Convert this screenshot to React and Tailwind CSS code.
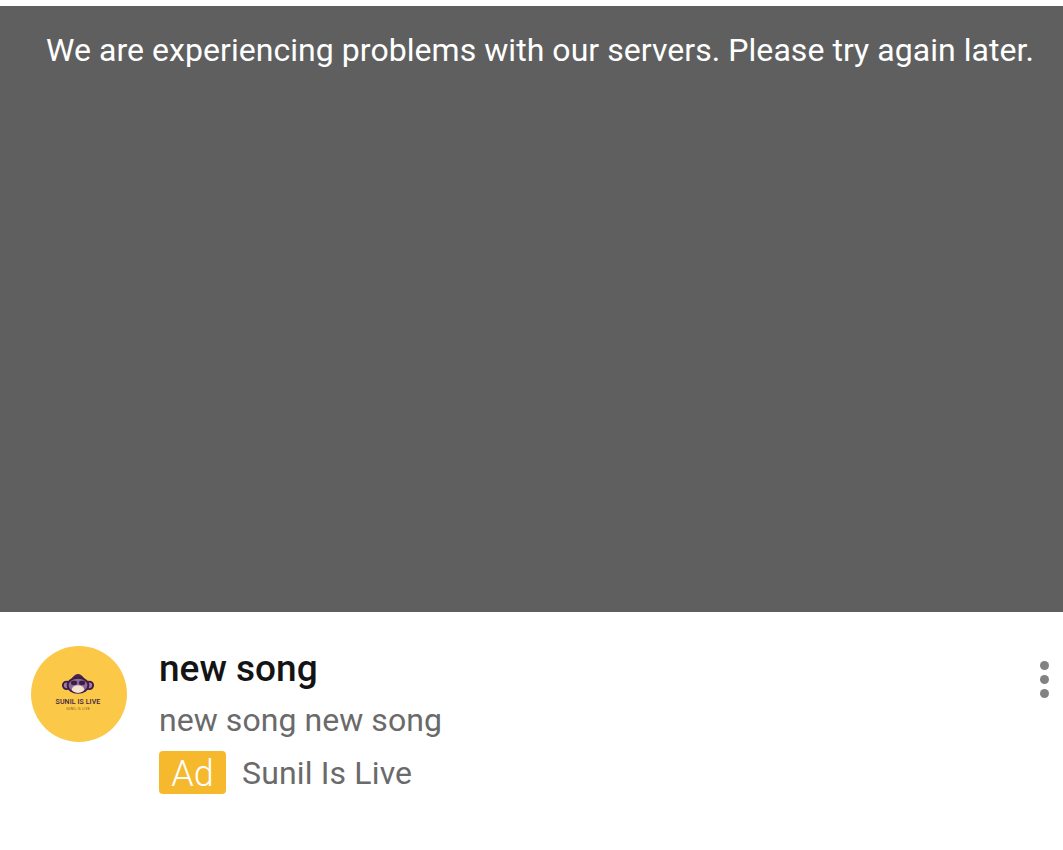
export default function App() {
  return (
    <div className="w-[1063px] h-[850px] bg-white overflow-hidden font-['Roboto',sans-serif]">
      <div className="h-[6px]" />
      <div className="h-[606px] bg-[#5f5f5f] text-white text-[32px] leading-[44px] tracking-[0.05px] pt-[22px] pl-[46px] whitespace-nowrap">
        We are experiencing problems with our servers. Please try again later.
      </div>
      <div className="flex pt-[34px] pl-[31px] pr-[14px]">
        <div className="w-[96px] h-[96px] rounded-full bg-[#fbc847] shrink-0 flex flex-col items-center pt-[26px]">
          <svg width="34" height="22" viewBox="0 0 36 23" className="-ml-[2px]">
            <path d="M11 7 Q18 -3 25 7 Z" fill="#4a2350" />
            <circle cx="6" cy="14" r="4" fill="#a07ca8" stroke="#3d1d44" strokeWidth="2" />
            <circle cx="30" cy="14" r="4" fill="#a07ca8" stroke="#3d1d44" strokeWidth="2" />
            <ellipse cx="18" cy="14" rx="11" ry="8" fill="#8d6a98" stroke="#3d1d44" strokeWidth="2" />
            <ellipse cx="18" cy="18" rx="6.5" ry="4" fill="#f3e3d0" />
            <rect x="10.5" y="9" width="6.5" height="4.5" rx="2" fill="#3d1d44" />
            <rect x="19" y="9" width="6.5" height="4.5" rx="2" fill="#3d1d44" />
          </svg>
          <div className="mt-[4px] -ml-[2px] text-[7px] leading-[9px] font-medium text-[#3d1d44] whitespace-nowrap tracking-[0.1px]">SUNIL IS LIVE</div>
          <div className="-ml-[2px] text-[3px] leading-[4px] tracking-[0.4px] text-[#6b4a2a] whitespace-nowrap">SUNIL IS LIVE</div>
        </div>
        <div className="ml-[32px] flex-1">
          <div className="text-[37px] leading-[46px] font-medium text-[#141414]">new song</div>
          <div className="text-[32px] leading-[40px] mt-[8px] tracking-[0.06px] text-[#6a6a6a]">new song new song</div>
          <div className="flex items-center mt-[11px]">
            <div className="w-[67px] h-[43px] rounded-[4px] bg-[#f6b92e] text-white text-[36px] font-light leading-[47px] text-center">Ad</div>
            <div className="ml-[16px] text-[32px] leading-[40px] tracking-[0.15px] text-[#6a6a6a]">Sunil Is Live</div>
          </div>
        </div>
        <div className="flex flex-col gap-[5px] pt-[15px]">
          <div className="w-[9px] h-[9px] rounded-full bg-[#828282]" />
          <div className="w-[9px] h-[9px] rounded-full bg-[#828282]" />
          <div className="w-[9px] h-[9px] rounded-full bg-[#828282]" />
        </div>
      </div>
    </div>
  );
}
